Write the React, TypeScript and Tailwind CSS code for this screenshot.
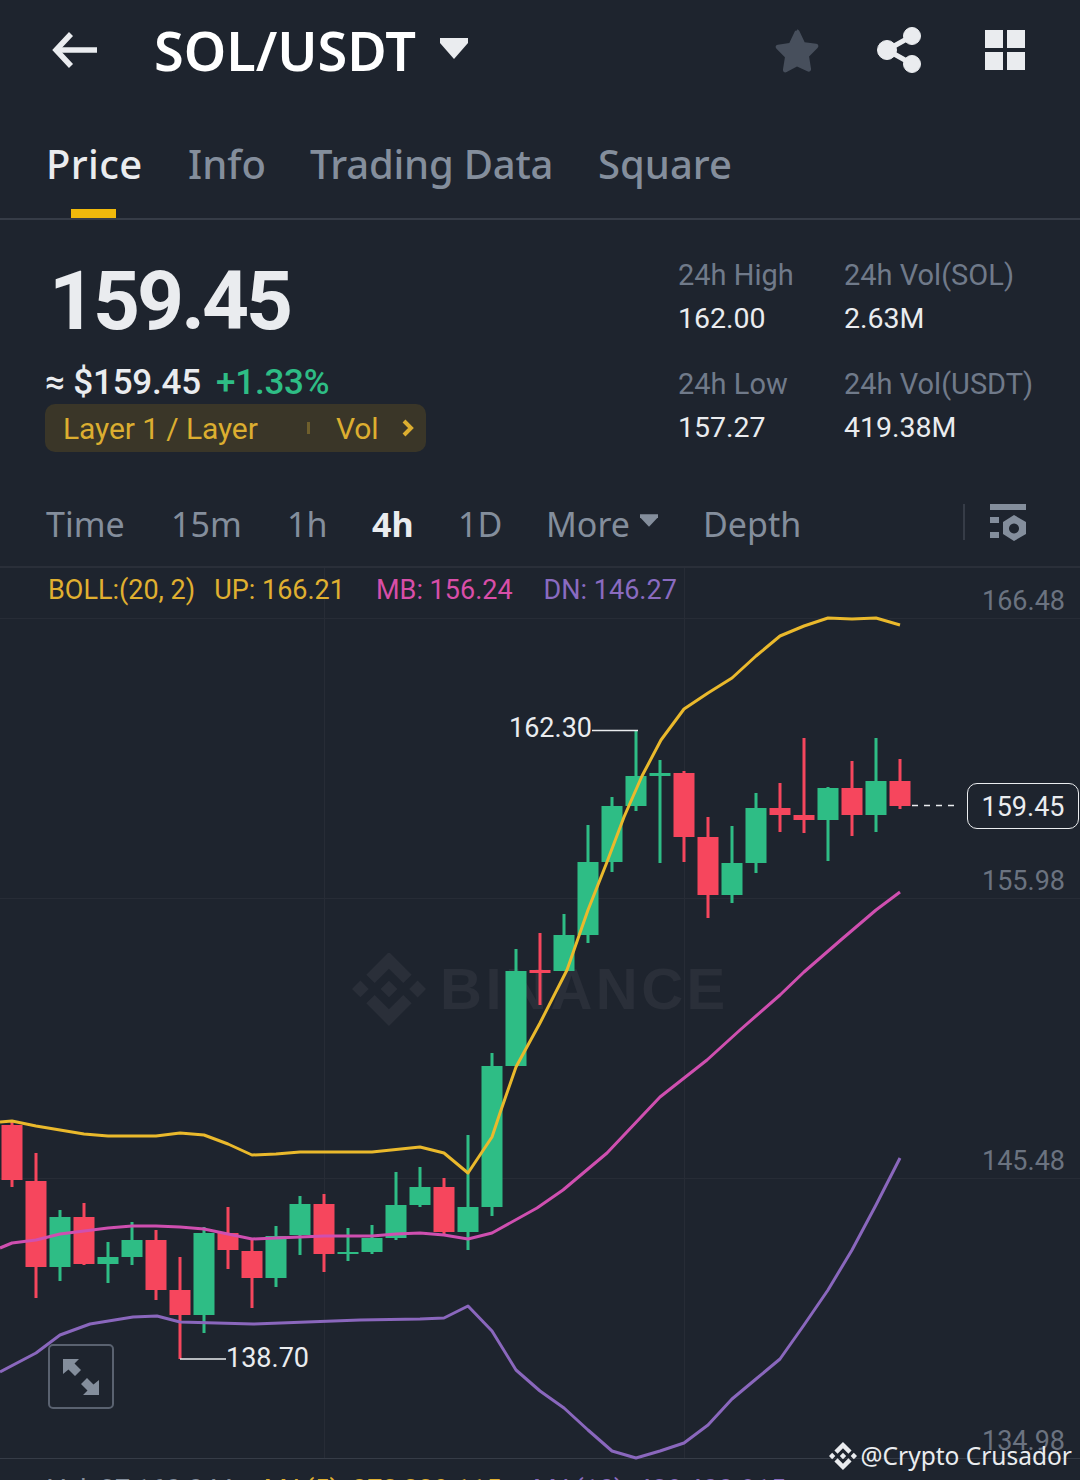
import React from 'react';
import { SiBinance } from 'react-icons/si';

const UI_FONT = "font-['Noto_Sans',sans-serif]";
const NUM_FONT = "font-['Roboto',sans-serif]";

// [x, wickTop, wickBottom, bodyTop, bodyBottom, up]
type Candle = [number, number, number, number, number, boolean];

const CANDLES: Candle[] = [
  [12, 1120, 1187, 1125, 1180, false],
  [36, 1153, 1298, 1181, 1267, false],
  [60, 1210, 1281, 1217, 1267, true],
  [84, 1203, 1265, 1217, 1264, false],
  [108, 1242, 1283, 1257, 1264, true],
  [132, 1222, 1265, 1240, 1257, true],
  [156, 1230, 1300, 1240, 1290, false],
  [180, 1257, 1359, 1290, 1315, false],
  [204, 1227, 1333, 1233, 1315, true],
  [228, 1207, 1269, 1233, 1250, false],
  [252, 1240, 1308, 1251, 1278, false],
  [276, 1226, 1287, 1236, 1278, true],
  [300, 1196, 1255, 1204, 1235, true],
  [324, 1194, 1272, 1204, 1254, false],
  [348, 1228, 1261, 1252, 1254, true],
  [372, 1225, 1254, 1238, 1252, true],
  [396, 1172, 1240, 1205, 1238, true],
  [420, 1167, 1207, 1187, 1205, true],
  [444, 1178, 1234, 1187, 1232, false],
  [468, 1135, 1250, 1207, 1232, true],
  [492, 1053, 1216, 1066, 1207, true],
  [516, 949, 1066, 971, 1066, true],
  [540, 933, 1005, 970, 973, false],
  [564, 914, 971, 935, 971, true],
  [588, 825, 943, 862, 935, true],
  [612, 797, 872, 806, 862, true],
  [636, 730, 811, 776, 806, true],
  [660, 760, 863, 773, 776, true],
  [684, 771, 862, 773, 837, false],
  [708, 817, 918, 837, 895, false],
  [732, 826, 903, 863, 895, true],
  [756, 793, 873, 808, 863, true],
  [780, 783, 832, 808, 815, false],
  [804, 738, 833, 815, 820, false],
  [828, 787, 861, 788, 820, true],
  [852, 761, 836, 788, 815, false],
  [876, 738, 832, 781, 815, true],
  [900, 759, 809, 781, 806, false],
];

const UP_LINE =
  '0,1122 12,1121 36,1126 84,1134 108,1136 156,1136 180,1133 204,1135 228,1144 252,1155 276,1154 300,1152 372,1152 420,1147 444,1153 468,1173 492,1137 500,1113 516,1067 540,1023 567,970 588,910 607,862 624,817 642,776 661,740 684,709 708,693 732,678 756,656 780,636 804,626 828,618 852,619 876,618 900,625';
const MB_LINE =
  '0,1248 12,1243 36,1240 60,1234 84,1231 108,1228 132,1226 156,1226 180,1227 204,1229 228,1234 252,1239 276,1238 324,1236 372,1236 396,1234 420,1233 444,1235 468,1239 492,1233 537,1208 563,1190 607,1153 660,1097 707,1060 740,1030 780,995 804,972 842,939 876,910 900,892';
const DN_LINE =
  '0,1372 36,1353 60,1335 90,1324 133,1317 157,1316 180,1322 253,1324 360,1320 420,1319 444,1318 468,1306 492,1331 516,1370 540,1391 564,1408 588,1430 612,1451 636,1458 660,1451 684,1443 708,1425 732,1399 756,1379 780,1359 804,1325 828,1290 852,1250 876,1205 900,1158';

const CHART_TOP = 568;

const StatCell: React.FC<{ label: string; value: string; width: string }> = ({ label, value, width }) => (
  <div className={`${width} ${NUM_FONT} text-[29px] leading-[43px]`}>
    <div className="text-[#707a8a] whitespace-nowrap">{label}</div>
    <div className="text-[28.5px] text-[#eaecef] whitespace-nowrap">{value}</div>
  </div>
);

const AxisLabel: React.FC<{ top: string; children: React.ReactNode }> = ({ top, children }) => (
  <div className={`absolute right-[15px] ${top} ${NUM_FONT} text-[27px] leading-[32px] text-[#6b7380]`}>{children}</div>
);

const Chart: React.FC = () => (
  <div className="relative h-[912px] overflow-hidden">
    {/* watermark sits under the candles */}
    <div className="absolute left-[352px] top-[384px] flex items-center gap-[14px] text-[#2a2f39]">
      <SiBinance size={74} />
      <span className="font-['Liberation_Sans',sans-serif] text-[58px] leading-[74px] font-bold tracking-[3.5px]">BINANCE</span>
    </div>

    <svg className="absolute left-0 top-0" width="1080" height="912" viewBox={`0 ${CHART_TOP} 1080 912`}>
      {[618, 898, 1178, 1458].map(y => (
        <line key={y} x1="0" x2="1080" y1={y + 0.5} y2={y + 0.5} stroke={y === 1458 ? '#363c47' : '#272c36'} strokeWidth="1" />
      ))}
      {[324, 684].map(x => (
        <line key={x} x1={x + 0.5} x2={x + 0.5} y1="568" y2="1458" stroke="#272c36" strokeWidth="1" />
      ))}
      {CANDLES.map(([x, wt, wb, bt, bb, up]) => (
        <g key={x} fill={up ? '#2ebd85' : '#f6465d'}>
          <rect x={x - 1.5} y={wt} width="3" height={wb - wt} />
          <rect x={x - 10.5} y={bt} width="21" height={bb - bt} />
        </g>
      ))}
      <polyline points={UP_LINE} fill="none" stroke="#eab92c" strokeWidth="3" strokeLinejoin="round" />
      <polyline points={MB_LINE} fill="none" stroke="#cf4fb0" strokeWidth="3" strokeLinejoin="round" />
      <polyline points={DN_LINE} fill="none" stroke="#8a67bd" strokeWidth="3" strokeLinejoin="round" />
      <line x1="592" x2="638" y1="730.5" y2="730.5" stroke="#eaecef" strokeWidth="1.5" />
      <line x1="180" x2="226" y1="1359" y2="1359" stroke="#eaecef" strokeWidth="1.5" />
      <line x1="912" x2="954" y1="805.5" y2="805.5" stroke="#eaecef" strokeWidth="1.5" strokeDasharray="6 6" />
    </svg>

    <div className={`absolute left-[48px] top-[5px] flex ${NUM_FONT} text-[27px] leading-[34px]`}>
      <span className="text-[#e0b030]">BOLL:(20, 2)</span>
      <span className="ml-[19px] text-[#e0b030]">UP: 166.21</span>
      <span className="ml-[31px] text-[#d84ea8]">MB: 156.24</span>
      <span className="ml-[31px] text-[#8a6bc0]">DN: 146.27</span>
    </div>

    <AxisLabel top="top-[17px]">166.48</AxisLabel>
    <AxisLabel top="top-[297px]">155.98</AxisLabel>
    <AxisLabel top="top-[577px]">145.48</AxisLabel>
    <AxisLabel top="top-[857px]">134.98</AxisLabel>

    <div className={`absolute left-[509px] top-[144px] ${NUM_FONT} text-[27px] leading-[32px] text-[#eaecef]`}>162.30</div>
    <div className={`absolute left-[226px] top-[774px] ${NUM_FONT} text-[27px] leading-[32px] text-[#eaecef]`}>138.70</div>

    <div className={`absolute left-[967px] top-[215px] flex h-[46px] w-[112px] items-center justify-center rounded-[10px] border-[1.5px] border-[#eaecef] bg-[#1e242e] pt-[2px] ${NUM_FONT} text-[27px] text-[#eaecef]`}>
      159.45
    </div>

    <div className="absolute left-[48px] top-[776px] flex h-[65px] w-[66px] items-center justify-center rounded-[5px] border-2 border-[#5a6270]">
      <svg width="40" height="40" viewBox="0 0 40 40" fill="#848e9c">
        <path d="M2 2H18L13.5 6.5L20 13L14 19L7.5 12.5L2 17Z" />
        <path d="M38 38H22L26.5 33.5L20 27L26 21L32.5 27.5L38 23Z" />
      </svg>
    </div>

    <div className={`absolute right-[8px] top-[870px] flex items-center gap-[4px] ${UI_FONT} text-[24.5px] leading-[36px] text-[#eaecef]`}>
      <SiBinance size={28} />
      <span>@Crypto Crusador</span>
    </div>

    <div className={`absolute left-[48px] top-[905px] flex ${NUM_FONT} text-[27px] leading-[34px] whitespace-nowrap`}>
      <span className="text-[#848e9c]">Vol: 37,160.044</span>
      <span className="ml-[30px] text-[#e0b030]">MA(5): 273,338.115</span>
      <span className="ml-[32px] text-[#8a6bc0]">MA(10): 438,400.815</span>
    </div>
  </div>
);

export default function App() {
  return (
    <div className="h-[1480px] w-[1080px] overflow-hidden bg-[#1e242e]">
      {/* top bar */}
      <div className="flex h-[100px] items-center pl-[52px] pr-[55px]">
        <svg width="46" height="36" viewBox="0 0 46 36" fill="none" stroke="#eaecef" strokeWidth="5.5">
          <path d="M45 18H4" />
          <path d="M19 2L4 18L19 34" />
        </svg>
        <span className={`ml-[56px] ${UI_FONT} text-[54px] leading-[60px] font-semibold text-white`}>SOL/USDT</span>
        <svg className="ml-[24px] mb-[4px]" width="28" height="22" viewBox="0 0 28 22" fill="#eaecef">
          <path d="M0 1H28V6L14 22L0 6Z" />
        </svg>
        <div className="ml-auto flex items-center">
          <svg width="46" height="46" viewBox="0 0 24 24" fill="#474f5c">
            <path d="M12 1.3c.6 0 1 .3 1.300.9l2.700 5.700 6 .9c1.200.2 1.500 1.300.7 2.100l-4.400 4.500 1 6.300c.2 1.200-.9 2-1.900 1.400L12 20.600l-5.400 2.900c-1 .6-2.100-.2-1.900-1.400l1-6.300-4.400-4.500c-.8-.8-.5-1.900.7-2.100l6-.9 2.700-5.700c.3-.6.700-.9 1.300-.7z" />
          </svg>
          <svg className="ml-[57px]" width="46" height="48" viewBox="0 0 46 48" fill="#eaecef" stroke="#eaecef">
            <circle cx="10" cy="24" r="9.500" />
            <circle cx="35" cy="10" r="8.500" />
            <circle cx="35" cy="38" r="8.500" />
            <path d="M10 24L35 10M10 24L35 38" strokeWidth="5" />
          </svg>
          <div className="ml-[62px] grid grid-cols-[18px_18px] grid-rows-[18px_18px] gap-[4px]">
            <div className="bg-[#eaecef]" />
            <div className="bg-[#eaecef]" />
            <div className="bg-[#eaecef]" />
            <div className="bg-[#eaecef]" />
          </div>
        </div>
      </div>

      {/* tabs */}
      <div className={`relative flex h-[120px] border-b-2 border-[#363c47] pl-[46px] pt-[35px] ${UI_FONT} text-[40px] leading-[58px] font-medium text-[#848e9c]`}>
        <span className="w-[142px] tracking-[0.4px] text-[#eaecef]">Price</span>
        <span className="w-[122px]">Info</span>
        <span className="w-[288px] tracking-[-0.2px]">Trading Data</span>
        <span>Square</span>
        <div className="absolute bottom-0 left-[71px] h-[9px] w-[45px] bg-[#f0b90b]" />
      </div>

      {/* price and 24h stats */}
      <div className="flex h-[229px]">
        <div className="w-[678px] pl-[45px]">
          <div className={`mt-[33px] pl-[4px] ${NUM_FONT} text-[82px] leading-[96px] font-bold tracking-[-3px] text-[#eaecef]`}>159.45</div>
          <div className={`mt-[15px] flex ${NUM_FONT} text-[35px] leading-[38px] font-medium tracking-[-0.2px]`}>
            <span className="text-[#eaecef]">≈ $159.45</span>
            <span className="ml-[15px] text-[#2ebd85]">+1.33%</span>
          </div>
          <div className={`mt-[2px] flex h-[48px] w-[381px] items-center rounded-[10px] bg-[#3a3628] pl-[18px] ${NUM_FONT} text-[30px] tracking-[-0.1px] text-[#dcae30]`}>
            <span className="w-[244px]">Layer 1 / Layer</span>
            <span className="h-[12px] w-[3px] bg-[#6f5f2c]" />
            <span className="ml-[26px]">Vol</span>
            <svg className="ml-[22px]" width="14" height="18" viewBox="0 0 14 18" fill="none" stroke="#dcae30" strokeWidth="4">
              <path d="M3 2L10 9L3 16" />
            </svg>
          </div>
        </div>
        <div className="grid h-fit grid-cols-[166px_1fr] gap-y-[23px] pt-[34px]">
          <StatCell label="24h High" value="162.00" width="w-[166px]" />
          <StatCell label="24h Vol(SOL)" value="2.63M" width="" />
          <StatCell label="24h Low" value="157.27" width="w-[166px]" />
          <StatCell label="24h Vol(USDT)" value="419.38M" width="" />
        </div>
      </div>

      {/* interval row */}
      <div className={`relative flex h-[119px] items-center border-b-2 border-[#2a2f39] pt-[34px] ${UI_FONT} text-[34px] text-[#848e9c]`}>
        <span className="ml-[46px] w-[125px]">Time</span>
        <span className="w-[116px]">15m</span>
        <span className="w-[85px]">1h</span>
        <span className="w-[86px] font-bold text-[#eaecef]">4h</span>
        <span className="w-[88px]">1D</span>
        <span className="w-[94px]">More</span>
        <svg className="mb-[8px]" width="18" height="13" viewBox="0 0 19 13" fill="#848e9c">
          <path d="M0 0H19V3L9.500 13L0 3Z" />
        </svg>
        <span className="ml-[45px]">Depth</span>
        <div className="absolute left-[963px] top-[55px] h-[36px] w-[2px] bg-[#363c47]" />
        <svg className="absolute left-[990px] top-[55px]" width="36" height="37" viewBox="0 0 36 37" fill="#848e9c">
          <rect x="0" y="0" width="36" height="6" />
          <rect x="0" y="13" width="9" height="6" />
          <rect x="0" y="28" width="9" height="6" />
          <path fillRule="evenodd" d="M24 11L36 18V30L24 37L13 30V18ZM24 19.500a5 5 0 1 0 .01 0Z" />
        </svg>
      </div>

      <Chart />
    </div>
  );
}
